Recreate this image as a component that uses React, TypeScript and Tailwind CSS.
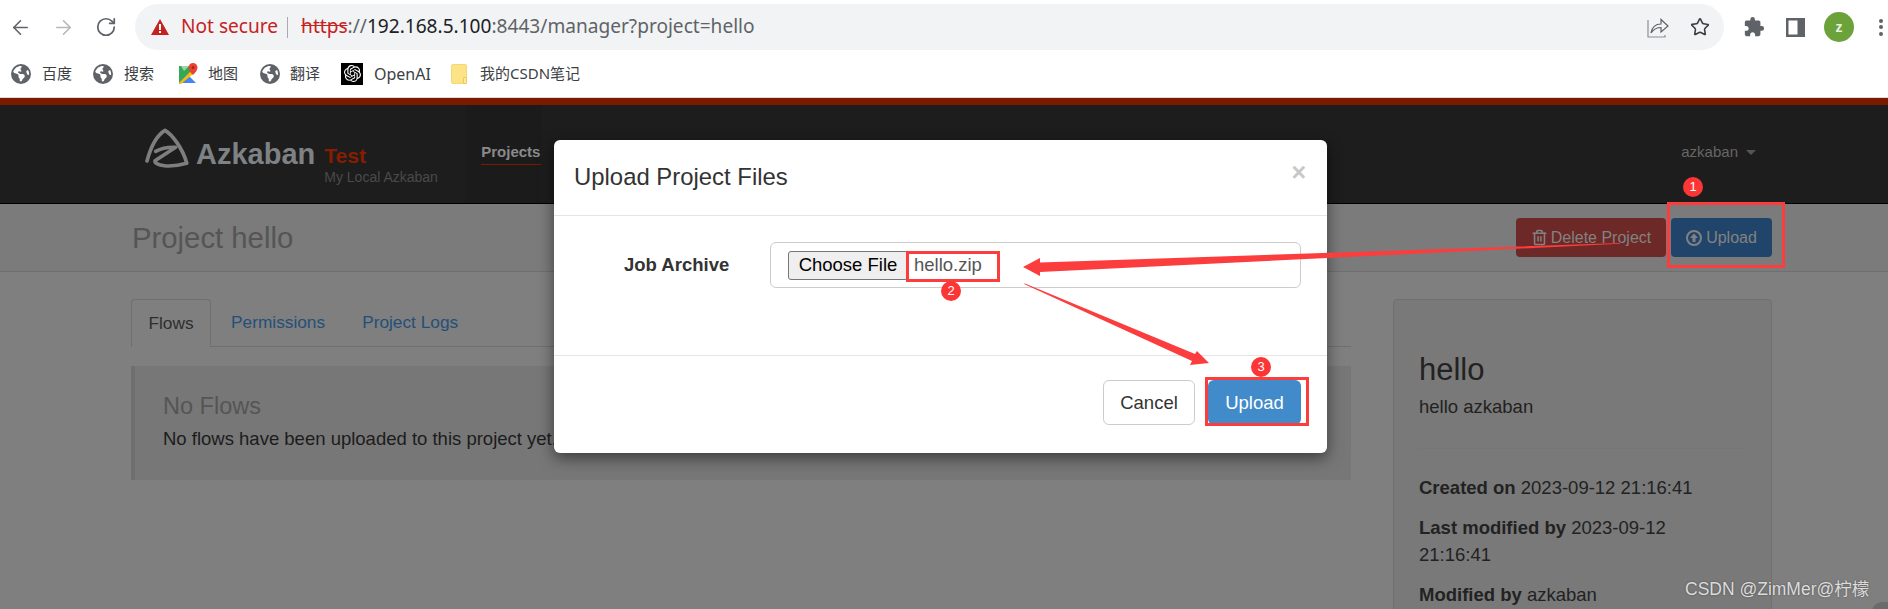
import React from "react";
import { ArrowLeft, ArrowRight, RotateCw, Star, Trash2 } from "lucide-react";
import { FaEarthAmericas } from "react-icons/fa6";
import { MdExtension } from "react-icons/md";
import { SiOpenai } from "react-icons/si";

const Badge = ({ n, className }: { n: number; className: string }) => (
	<div className={`absolute flex size-5 items-center justify-center rounded-full bg-[#fc3535] text-[13px] text-white ${className}`}>{n}</div>
);

const Bookmark = ({ icon, label, className }: { icon: React.ReactNode; label: string; className: string }) => (
	<div className={`flex items-center ${className}`}>
		{icon}
		<span>{label}</span>
	</div>
);

const AzkabanLogo = () => (
	<svg viewBox="0 0 180 168" className="h-[56px] w-[60px] shrink-0" fill="none" stroke="#7e7e7e" strokeWidth="11" strokeLinecap="round" strokeLinejoin="round">
		<path d="M36 117C48 72 68 38 90 25C112 38 142 78 155 122" />
		<path d="M62 88C80 78 100 75 122 76L60 116C58 132 105 138 155 124" />
	</svg>
);

const MapsIcon = () => (
	<svg viewBox="0 0 20 22" className="mr-[10px] h-[22px] w-[20px]">
		<path d="M1 3h12v8L1 20z" fill="#34a853" />
		<path d="M1 20 9 11l9 9z" fill="#4285f4" />
		<path d="M1 20 13 8l2 3L3 21H1z" fill="#fbbc04" />
		<path d="M3 3h8L6 8z" fill="#9fd3a8" />
		<path d="M15 0a4.5 4.5 0 0 1 4.5 4.5C19.500 8 15 12 15 12s-4.500-4-4.500-7.500A4.500 4.500 0 0 1 15 0z" fill="#ea4335" />
		<circle cx="15" cy="4.500" r="1.500" fill="#a52714" />
	</svg>
);

const App = () => {
	return (
		<div className="relative flex h-[609px] w-[1888px] flex-col overflow-hidden bg-[#7f7f7f] font-['Liberation_Sans','Noto_Sans_CJK_SC',sans-serif]">
			{/* browser toolbar */}
			<div className="flex h-[50px] shrink-0 items-end bg-white text-[#5f6368]">
				<div className="flex h-[46px] w-[135px] items-center pl-[9px]">
					<ArrowLeft className="size-[23px]" strokeWidth={1.7} />
					<ArrowRight className="ml-5 size-[23px] text-[#b4b7ba]" strokeWidth={1.7} />
					<RotateCw className="ml-5 size-[22px]" strokeWidth={1.9} />
				</div>
				<div className="flex h-[46px] w-[1589px] items-center rounded-full bg-[#f1f3f4] pl-[16px] pr-[14px] font-['Noto_Sans','Noto_Sans_CJK_SC',sans-serif] text-[19.100px]">
					<svg viewBox="0 0 18 16" className="h-4 w-[18px]">
						<path d="M9 0 18 16H0z" fill="#c5221f" />
						<rect x="8" y="5" width="2" height="6" fill="#fff" />
						<rect x="8" y="12" width="2" height="2" fill="#fff" />
					</svg>
					<span className="-mt-[2px] ml-[12px] text-[#c5221f]">Not secure</span>
					<div className="ml-[9px] h-[21px] w-px bg-[#a9acaf]" />
					<span className="-mt-[2px] ml-[13px] text-[#5f6368]">
						<span className="text-[#c5221f] line-through">https</span>://<span className="text-[#202124]">192.168.5.100</span>:8443/manager?project=hello
					</span>
					<svg viewBox="0 0 22 22" className="ml-auto size-[22px]" fill="none" stroke="#5f6368" strokeWidth="1.200">
						<path d="M1 4v17h17v-2" stroke="#8d9094" />
						<path d="M4 17c1-6 4-9 10-9V3.500l7 6.500-7 6v-4.500c-4 0-7 1-10 5.500z" />
					</svg>
					<Star className="ml-[21px] size-[20px] text-[#3c4043]" strokeWidth={1.9} />
				</div>
				<div className="flex h-[46px] flex-1 items-center pl-[19px]">
					<MdExtension className="size-[22px]" />
					<svg viewBox="0 0 19 19" className="ml-[21px] size-[19px]">
						<rect width="19" height="19" fill="#5f6368" />
						<rect x="2.500" y="2.500" width="9" height="14" fill="#fff" />
					</svg>
					<div className="ml-[19px] flex size-[30px] items-center justify-center rounded-full bg-[#6ca23a] text-[14px] font-bold text-[#e8f0df]">z</div>
					<div className="ml-[25px] flex flex-col gap-[2.500px]">
						<div className="size-[4px] rounded-full bg-[#5f6368]" />
						<div className="size-[4px] rounded-full bg-[#5f6368]" />
						<div className="size-[4px] rounded-full bg-[#5f6368]" />
					</div>
				</div>
			</div>
			{/* bookmarks */}
			<div className="flex h-[47px] shrink-0 items-center bg-white pl-[11px] font-['Noto_Sans','Noto_Sans_CJK_SC',sans-serif] text-[15px] text-[#3c4043]">
				<Bookmark className="w-[82px]" label="百度" icon={<FaEarthAmericas className="mr-[11px] size-[20px] text-[#5f6368]" />} />
				<Bookmark className="w-[85px]" label="搜索" icon={<FaEarthAmericas className="mr-[11px] size-[20px] text-[#5f6368]" />} />
				<Bookmark className="w-[82px]" label="地图" icon={<MapsIcon />} />
				<Bookmark
					className="w-[81px]"
					label="翻译"
					icon={<FaEarthAmericas className="mr-[10px] size-[20px] text-[#5f6368]" />}
				/>
				<Bookmark
					className="w-[110px] text-[16px]"
					label="OpenAI"
					icon={
						<div className="mr-[11px] flex size-[22px] items-center justify-center bg-black">
							<SiOpenai className="size-[17px] text-white" />
						</div>
					}
				/>
				<Bookmark
					className=""
					label="我的CSDN笔记"
					icon={
						<div className="relative mr-[13px] h-[20px] w-[16px] rounded-[2px] border border-[#f7d774] bg-[#fde388]">
							<div className="absolute -bottom-px -right-px h-[7px] w-[4px] rounded-[1px] border border-[#f2c94c] bg-[#fde9a0]" />
						</div>
					}
				/>
			</div>
			{/* azkaban nav */}
			<div className="shrink-0 border-t border-[#dcdcdc] bg-[#7c1a00] pt-[7px]">
				<div className="flex h-[99px] border-b border-black bg-[#1d1d1d] pl-[135px] pr-[132px]">
					<div className="mt-[17px]">
						<AzkabanLogo />
					</div>
					<span className="ml-[1px] mt-[32px] text-[29px] font-bold leading-[34px] text-[#7f8284]">Azkaban</span>
					<div className="ml-[9px] flex w-[141px] flex-col">
						<span className="mt-[39px] text-[21px] font-bold leading-[24px] text-[#861d00]">Test</span>
						<span className="mt-[1px] text-[14px] leading-[16px] text-[#4a4a4a]">My Local Azkaban</span>
					</div>
					<div className="flex w-[76px] flex-col bg-[#1b1b1b] pl-4">
						<span className="mt-[37px] w-[60px] border-b border-[#7c1a00] pb-[3px] text-[15px] font-bold leading-[19px] text-[#8a8a8a]">Projects</span>
					</div>
					<div className="ml-auto mt-[37px] flex h-[20px] items-center text-[15px] text-[#666]">
						azkaban
						<div className="ml-2 border-x-[5px] border-t-[5px] border-x-transparent border-t-[#555]" />
					</div>
				</div>
			</div>
			{/* project header */}
			<div className="flex h-[68px] shrink-0 items-center justify-between border-b border-[#6f6f6f] bg-[#7b7b7b] pl-[132px] pr-[116px]">
				<h1 className="text-[29.300px] text-[#555]">Project hello</h1>
				<div className="flex gap-[5px] text-[16px] text-[#828282]">
					<div className="flex h-[39px] w-[150px] items-center justify-center rounded-[4px] bg-[#6d2927]">
						<Trash2 className="mr-[3px] size-[17px]" strokeWidth={2.2} />
						Delete Project
					</div>
					<div className="flex h-[39px] w-[101px] items-center justify-center rounded-[4px] bg-[#21456a]">
						<svg viewBox="0 0 16 16" className="mr-[4px] size-4" fill="currentColor">
							<path fillRule="evenodd" d="M8 0a8 8 0 1 1 0 16A8 8 0 0 1 8 0zm0 2a6 6 0 1 0 0 12A6 6 0 0 0 8 2z" />
							<path d="M8 3.500 12 8H9.500v4h-3V8H4z" />
						</svg>
						Upload
					</div>
				</div>
			</div>
			{/* project body */}
			<div className="flex flex-1 gap-[42px] pl-[131px] pt-[27px]">
				<div className="w-[1220px]">
					<div className="flex h-[48px] border-b border-[#6f6f6f] text-[17.300px]">
						<div className="flex h-[48px] w-[80px] items-center justify-center rounded-t-[4px] border border-b-0 border-[#6f6f6f] bg-[#7f7f7f] text-[#2e2e2e]">Flows</div>
						<div className="ml-[20px] flex h-[47px] items-center text-[#244f78]">Permissions</div>
						<div className="ml-[37px] flex h-[47px] items-center text-[#244f78]">Project Logs</div>
					</div>
					<div className="mt-[19px] h-[114px] border-l-4 border-[#6f6f6f] bg-[#777] pl-[28px] pt-[24px]">
						<h4 className="text-[23.500px] leading-[32px] text-[#555]">No Flows</h4>
						<p className="mt-[1px] text-[18.500px] leading-[32px] text-[#1c1c1c]">No flows have been uploaded to this project yet.</p>
					</div>
				</div>
				<div className="h-[400px] w-[379px] rounded-[4px] border border-[#707070] bg-[#797979] pl-[25px] pr-[40px] pt-[45px] text-[18.500px] leading-[27px] text-[#222]">
					<h3 className="text-[31px] leading-[50px] text-[#222]">hello</h3>
					<p className="-mt-[2px]">hello azkaban</p>
					<hr className="mt-[28px] -mr-[15px] border-[#767676]" />
					<p className="mt-[25px]">
						<b>Created on</b> 2023-09-12 21:16:41
					</p>
					<p className="mt-[13px]">
						<b>Last modified by</b> 2023-09-12 21:16:41
					</p>
					<p className="mt-[13px]">
						<b>Modified by</b> azkaban
					</p>
				</div>
			</div>
			{/* modal */}
			<div className="absolute left-[554px] top-[140px] flex h-[313px] w-[773px] flex-col rounded-[6px] bg-white shadow-[0_5px_15px_rgba(0,0,0,0.5)]">
				<div className="flex h-[76px] shrink-0 items-center justify-between border-b border-[#e5e5e5] pb-[2px] pl-[20px] pr-[21px]">
					<h3 className="text-[23.900px] text-[#333]">Upload Project Files</h3>
					<span className="-mt-[9px] text-[25px] font-bold leading-none text-[#c8c8c8]">×</span>
				</div>
				<div className="flex h-[140px] shrink-0 border-b border-[#e5e5e5] pl-[70px] pt-[26px]">
					<label className="w-[146px] pt-[9px] text-[18.500px] font-bold leading-[28px] text-[#333]">Job Archive</label>
					<div className="flex h-[46px] w-[531px] items-center rounded-[6px] border border-[#ccc] pl-[17px] text-[18.500px] text-[#555]">
						<div className="flex h-[29px] w-[120px] items-center justify-center rounded-[3px] border border-[#767676] bg-[#efefef] text-black">Choose File</div>
						<span className="ml-[6px]">hello.zip</span>
					</div>
				</div>
				<div className="flex flex-1 items-start justify-end gap-[13px] pr-[26px] pt-[24px] text-[18.500px]">
					<div className="flex h-[45px] w-[92px] items-center justify-center rounded-[6px] border border-[#ccc] text-[#333]">Cancel</div>
					<div className="flex h-[45px] w-[93px] items-center justify-center rounded-[6px] bg-[#428bca] text-white">Upload</div>
				</div>
			</div>
			{/* annotations */}
			<div className="absolute left-[1667px] top-[202px] h-[66px] w-[118px] border-[3px] border-[#fc3d3d]" />
			<div className="absolute left-[906px] top-[251px] h-[31px] w-[94px] border-[3px] border-[#fc3d3d]" />
			<div className="absolute left-[1205px] top-[377px] h-[49px] w-[104px] border-[3px] border-[#fc3d3d]" />
			<Badge n={1} className="left-[1683px] top-[177px]" />
			<Badge n={2} className="left-[941px] top-[281px]" />
			<Badge n={3} className="left-[1251px] top-[357px]" />
			<svg viewBox="0 0 1888 609" className="pointer-events-none absolute left-0 top-0 h-[609px] w-[1888px]">
				<path d="M1023 267 1040 258 1040 262.500 1620 243 1620 243.800 1040 272 1040 276z" fill="#fc3d3d" />
				<path d="M1024 284 1025 283.500 1195 354 1197 351 1209 363 1190 365 1192 361z" fill="#fc3d3d" />
			</svg>
			<div className="absolute left-[1685px] top-[576px] text-[17.500px] leading-[26px] text-[#dcdcdc] [text-shadow:0_0_2px_rgba(0,0,0,0.4)]">
				CSDN @ZimMer@柠檬
			</div>
			<div className="absolute left-[1872px] top-[602px] h-[20px] w-[30px] rounded-tl-[10px] bg-[#6b6b6b]" />
		</div>
	);
};

export default App;
